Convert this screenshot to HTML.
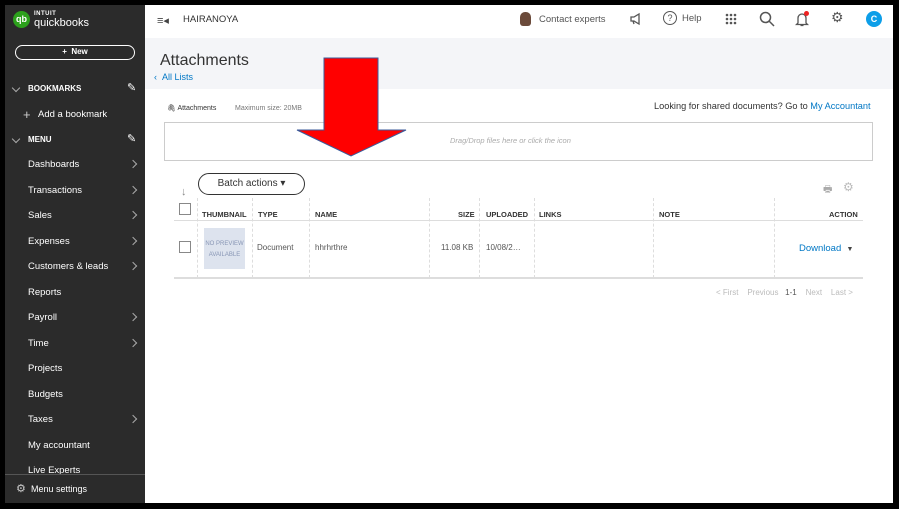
<!DOCTYPE html>
<html><head><meta charset="utf-8"><style>
*{margin:0;padding:0;box-sizing:border-box}
body{width:899px;height:509px;background:#000;position:relative;overflow:hidden;font-family:"Liberation Sans",sans-serif}
.a{position:absolute}
#side{left:5px;top:5px;width:140px;height:498px;background:#2b2b2b;color:#fff}
#main{left:145px;top:5px;width:748px;height:498px;background:#fff}
.mi{position:absolute;left:23px;font-size:9.5px;color:#fff}
.chev{position:absolute;left:125px;width:6px;height:6px;border-right:1.3px solid #aaa;border-top:1.3px solid #aaa;transform:rotate(45deg)}
.th{position:absolute;top:205px;font-size:7.5px;font-weight:bold;color:#333}
.vl{position:absolute;width:0;border-left:1px dashed #ddd}
.g{color:#555}
</style></head><body>
<div id="side" class="a">
  <div class="a" style="left:8px;top:6px;width:17px;height:17px;border-radius:50%;background:#2ca01c;color:#fff;font-size:9px;font-weight:bold;text-align:center;line-height:17px">qb</div>
  <div class="a" style="left:29px;top:6px;font-size:6px;font-weight:bold;letter-spacing:.5px">INTUIT</div>
  <div class="a" style="left:29px;top:12px;font-size:11px">quickbooks</div>
  <div class="a" style="left:10px;top:40px;width:120px;height:15px;border:1.5px solid #fff;border-radius:8px;font-size:8px;font-weight:bold;text-align:center;line-height:12px">+ &nbsp;New</div>
  <div class="a" style="left:8px;top:80px;width:6px;height:6px;border-right:1.2px solid #aaa;border-bottom:1.2px solid #aaa;transform:rotate(45deg)"></div>
  <div class="a" style="left:23px;top:79px;font-size:8px;font-weight:bold">BOOKMARKS</div>
  <div class="a" style="left:122px;top:76px;font-size:11px">✎</div>
  <div class="a" style="left:18px;top:102px;font-size:13px;color:#ccc">+</div>
  <div class="a" style="left:33px;top:104px;font-size:9.5px">Add a bookmark</div>
  <div class="a" style="left:8px;top:131px;width:6px;height:6px;border-right:1.2px solid #aaa;border-bottom:1.2px solid #aaa;transform:rotate(45deg)"></div>
  <div class="a" style="left:23px;top:130px;font-size:8px;font-weight:bold">MENU</div>
  <div class="a" style="left:122px;top:127px;font-size:11px">✎</div>
  <div class="mi" style="top:154px">Dashboards</div><div class="chev" style="top:156px"></div>
  <div class="mi" style="top:180px">Transactions</div><div class="chev" style="top:182px"></div>
  <div class="mi" style="top:205px">Sales</div><div class="chev" style="top:207px"></div>
  <div class="mi" style="top:231px">Expenses</div><div class="chev" style="top:233px"></div>
  <div class="mi" style="top:256px">Customers &amp; leads</div><div class="chev" style="top:258px"></div>
  <div class="mi" style="top:282px">Reports</div>
  <div class="mi" style="top:307px">Payroll</div><div class="chev" style="top:309px"></div>
  <div class="mi" style="top:333px">Time</div><div class="chev" style="top:335px"></div>
  <div class="mi" style="top:358px">Projects</div>
  <div class="mi" style="top:384px">Budgets</div>
  <div class="mi" style="top:409px">Taxes</div><div class="chev" style="top:411px"></div>
  <div class="mi" style="top:435px">My accountant</div>
  <div class="mi" style="top:460px">Live Experts</div>
  <div class="a" style="left:0;top:469px;width:140px;height:29px;background:#2b2b2b;border-top:1px solid #555"></div>
  <div class="a" style="left:11px;top:477px;font-size:11px;color:#ccc">⚙</div>
  <div class="a" style="left:26px;top:479px;font-size:9px">Menu settings</div>
</div>
<div id="main" class="a">
  <div class="a" style="left:12px;top:9px;font-size:11px;color:#444">≡◂</div>
  <div class="a" style="left:38px;top:9px;font-size:9.5px;color:#333">HAIRANOYA</div>
  <div class="a" style="left:375px;top:7px;width:11px;height:14px;border-radius:5px 5px 3px 3px;background:#6b4a3a"></div>
  <div class="a" style="left:394px;top:9px;font-size:9.5px;color:#555">Contact experts</div>
  <svg class="a" style="left:484px;top:7px" width="14" height="14" viewBox="0 0 14 14" fill="none" stroke="#555" stroke-width="1.3"><path d="M2 5h3l5-3v10l-5-3H2z M4 9l1 3"/></svg>
  <div class="a" style="left:518px;top:6px;width:14px;height:14px;border:1.3px solid #555;border-radius:50%;font-size:9px;text-align:center;line-height:12px;color:#555">?</div>
  <div class="a" style="left:537px;top:8px;font-size:9.5px;color:#555">Help</div>
  <svg class="a" style="left:580px;top:8px" width="12" height="12" fill="#555"><circle cx="2" cy="2" r="1.3"/><circle cx="6" cy="2" r="1.3"/><circle cx="10" cy="2" r="1.3"/><circle cx="2" cy="6" r="1.3"/><circle cx="6" cy="6" r="1.3"/><circle cx="10" cy="6" r="1.3"/><circle cx="2" cy="10" r="1.3"/><circle cx="6" cy="10" r="1.3"/><circle cx="10" cy="10" r="1.3"/></svg>
  <svg class="a" style="left:614px;top:6px" width="16" height="16" fill="none" stroke="#555" stroke-width="1.5"><circle cx="6.5" cy="6.5" r="5"/><path d="M10 10l5 5"/></svg>
  <svg class="a" style="left:650px;top:6px" width="14" height="16" fill="none" stroke="#555" stroke-width="1.3"><path d="M3 12V7a4 4 0 0 1 8 0v5l1.5 1.5h-11z M5.5 14.5h3"/></svg>
  <div class="a" style="left:659px;top:6px;width:5px;height:5px;border-radius:50%;background:#e22"></div>
  <div class="a" style="left:686px;top:4px;font-size:14px;color:#555">⚙</div>
  <div class="a" style="left:721px;top:6px;width:16px;height:16px;border-radius:50%;background:#0d9ee8;color:#fff;font-size:9px;font-weight:bold;text-align:center;line-height:16px">C</div>
  <div class="a" style="left:0;top:33px;width:748px;height:51px;background:#f4f5f8"></div>
  <div class="a" style="left:15px;top:47px;font-size:16px;color:#333">Attachments</div>
  <div class="a" style="left:9px;top:67px;font-size:9px;color:#0077c5">‹ &nbsp;All Lists</div>
  <div class="a" style="left:22px;top:99px;font-size:7px;color:#333">🖇︎ Attachments</div>
  <div class="a" style="left:90px;top:100px;font-size:7px;color:#777">Maximum size: 20MB</div>
  <div class="a" style="left:509px;top:96px;font-size:9.2px;color:#333">Looking for shared documents? Go to <span style="color:#0077c5">My Accountant</span></div>
  <div class="a" style="left:19px;top:117px;width:709px;height:39px;border:1px solid #ccc"></div>
  <div class="a" style="left:305px;top:131px;font-size:7.5px;font-style:italic;color:#aaa">Drag/Drop files here or click the icon</div>
  <div class="a" style="left:36px;top:181px;font-size:11px;color:#888">↓</div>
  <div class="a" style="left:53px;top:168px;width:107px;height:22px;border:1.3px solid #333;border-radius:11px;font-size:10px;color:#333;text-align:center;line-height:20px">Batch actions ▾</div>
  <div class="a" style="left:678px;top:177px;font-size:10px;color:#aaa">🖶︎</div>
  <div class="a" style="left:698px;top:175px;font-size:12px;color:#bbb">⚙</div>
  <div class="a" style="left:34px;top:198px;width:12px;height:12px;border:1px solid #888;background:#fff"></div>
  <div class="th" style="left:57px">THUMBNAIL</div><div class="th" style="left:113px">TYPE</div><div class="th" style="left:170px">NAME</div>
  <div class="th" style="left:313px">SIZE</div><div class="th" style="left:341px">UPLOADED</div><div class="th" style="left:394px">LINKS</div>
  <div class="th" style="left:514px">NOTE</div><div class="th" style="left:684px">ACTION</div>
  <div class="a" style="left:29px;top:215px;width:689px;height:1px;background:#ddd"></div>
  <div class="vl" style="left:52px;top:193px;height:80px"></div><div class="vl" style="left:107px;top:193px;height:80px"></div>
  <div class="vl" style="left:164px;top:193px;height:80px"></div><div class="vl" style="left:284px;top:193px;height:80px"></div>
  <div class="vl" style="left:334px;top:193px;height:80px"></div><div class="vl" style="left:389px;top:193px;height:80px"></div>
  <div class="vl" style="left:508px;top:193px;height:80px"></div><div class="vl" style="left:629px;top:193px;height:80px"></div>
  <div class="a" style="left:34px;top:236px;width:12px;height:12px;border:1px solid #888"></div>
  <div class="a" style="left:59px;top:223px;width:41px;height:41px;background:#dde3ee;font-size:6px;color:#8896b5;text-align:center;padding-top:11px;line-height:11px">NO PREVIEW<br>AVAILABLE</div>
  <div class="a g" style="left:112px;top:238px;font-size:8px">Document</div>
  <div class="a g" style="left:170px;top:238px;font-size:8px">hhrhrthre</div>
  <div class="a g" style="left:296px;top:238px;font-size:8px">11.08 KB</div>
  <div class="a g" style="left:341px;top:238px;font-size:8px">10/08/2…</div>
  <div class="a" style="left:654px;top:238px;font-size:9.5px;color:#0077c5">Download &nbsp;<span style="color:#444;font-size:7px">▼</span></div>
  <div class="a" style="left:29px;top:272px;width:689px;height:2px;background:#ddd"></div>
  <div class="a" style="left:571px;top:283px;font-size:8px;color:#bbb">&lt; First &nbsp;&nbsp; Previous &nbsp; <span style="color:#555">1-1</span> &nbsp;&nbsp; Next &nbsp;&nbsp; Last &gt;</div>
</div>
<svg class="a" style="left:0;top:0" width="899" height="509"><polygon points="324,58 378,58 378,130 406,130 351,156 297,130 324,130" fill="#f00" stroke="#3a5a9a" stroke-width="1"/></svg>
</body></html>
